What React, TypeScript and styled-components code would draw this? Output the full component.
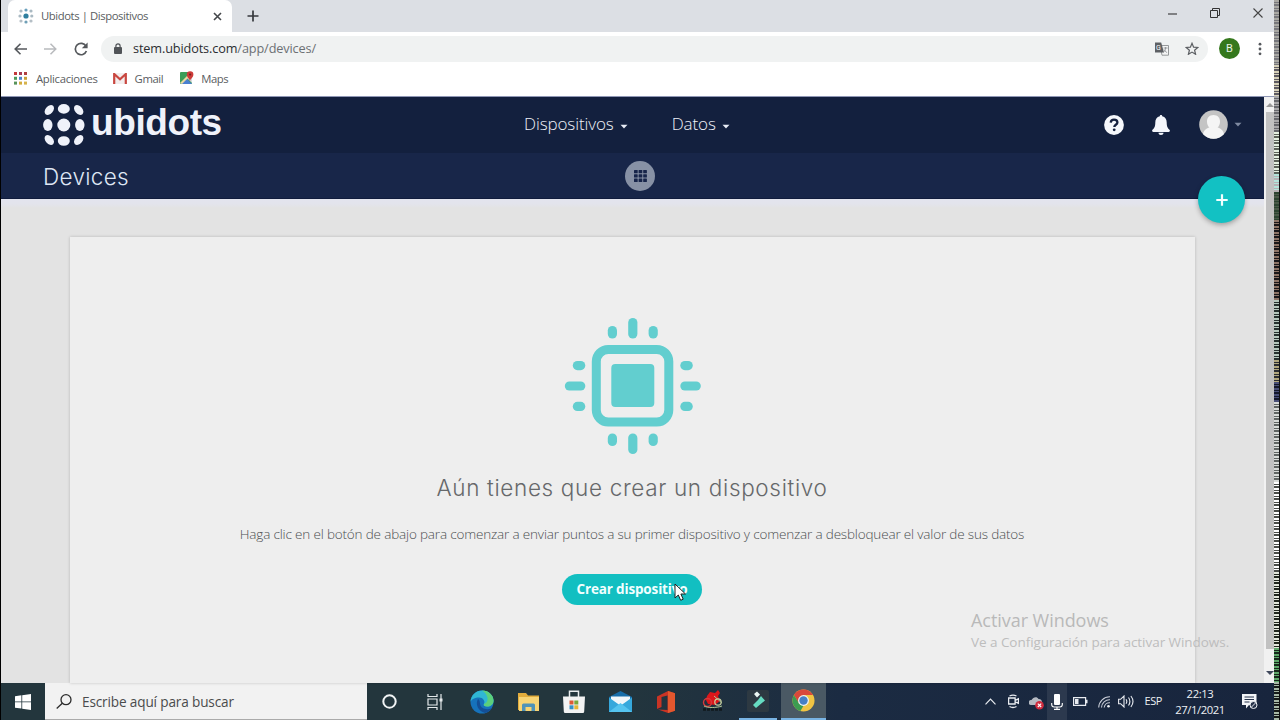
import React from "react";
import styled, { createGlobalStyle } from "styled-components";

const Global = createGlobalStyle`
  * { box-sizing: border-box; }
  body { margin: 0; overflow: hidden; font-family: "Open Sans", "Noto Sans", sans-serif; }
  svg { display: block; flex: none; }
`;

const Desktop = styled.div`
  position: relative;
  width: 1280px;
  height: 720px;
  display: flex;
  background: #fff;
  border-left: 1px solid #000;
  border-right: 1px solid #111;
  overflow: hidden;
`;
const Screen = styled.div`
  width: 1273px;
  display: flex;
  flex-direction: column;
  flex: none;
`;
const EdgeStrip = styled.div`
  width: 5px;
  display: flex;
  flex-direction: column;
`;
const EdgeBand = styled.div<{ $h: number; $a: string; $b: string }>`
  height: ${(p) => p.$h}px;
  background: repeating-linear-gradient(180deg, ${(p) => p.$a} 0 2px, ${(p) => p.$b} 2px 3px, ${(p) => p.$a} 3px 4px, ${(p) => p.$b} 4px 6px);
`;

const Label = styled.span<{ $size: number; $ls?: number; $color?: string; $weight?: number; $ml?: number; $dy?: number }>`
  font-size: ${(p) => p.$size}px;
  letter-spacing: ${(p) => p.$ls ?? 0}px;
  color: ${(p) => p.$color ?? "#5a5d61"};
  font-weight: ${(p) => p.$weight ?? 400};
  margin-left: ${(p) => p.$ml ?? 0}px;
  margin-top: ${(p) => p.$dy ?? 0}px;
  line-height: 1.35;
  white-space: nowrap;
`;
const Slot = styled.div<{ $ml?: number; $dy?: number }>`
  margin-left: ${(p) => p.$ml ?? 0}px;
  margin-top: ${(p) => p.$dy ?? 0}px;
  flex: none;
`;

/* Browser chrome */
const TabStrip = styled.div`
  height: 32px;
  display: flex;
  align-items: center;
  padding-left: 7px;
  background: #dcdfe4;
`;
const Tab = styled.div`
  width: 224px;
  height: 32px;
  display: flex;
  align-items: center;
  padding-left: 10px;
  background: #fff;
  border-radius: 7px 7px 0 0;
`;
const Push = styled.div`
  flex: 1;
`;
const Toolbar = styled.div`
  height: 33px;
  display: flex;
  align-items: center;
  padding-left: 13px;
  background: #fff;
`;
const Address = styled.div`
  width: 1107px;
  height: 26px;
  margin-left: 13px;
  display: flex;
  align-items: center;
  padding: 0 9px 0 13px;
  border-radius: 13px;
  background: #f0f2f2;
`;
const Profile = styled.div`
  width: 21px;
  height: 21px;
  margin-left: 11px;
  border-radius: 50%;
  background: #35781d;
  color: #e8f2e4;
  font: 11px/21px Roboto, sans-serif;
  text-align: center;
`;
const Bookmarks = styled.div`
  height: 32px;
  display: flex;
  align-items: center;
  padding: 0 0 5px 13px;
  background: #fff;
  border-bottom: 1px solid #8f97b5;
`;

/* Web application */
const Viewport = styled.div`
  height: 586px;
  display: flex;
`;
const Page = styled.div`
  position: relative;
  width: 1263px;
  display: flex;
  flex-direction: column;
  background: #e2e2e2;
`;
const NavBar = styled.header`
  height: 56px;
  display: flex;
  align-items: center;
  padding: 0 0 1px 42px;
  background: #13203e;
`;
const Wordmark = styled.div`
  margin: -4px 0 0 6px;
  width: 133px;
  color: #eff2fa;
  font: 700 37px/42px "Liberation Sans", sans-serif;
  letter-spacing: -0.4px;
`;
const SubBar = styled.div`
  height: 46px;
  display: flex;
  align-items: center;
  padding-left: 42px;
  background: #182649;
  border-bottom: 1px solid #101c3d;
`;
const Heading = styled.h1<{ $size: number; $ls: number; $color: string }>`
  margin: 0;
  font: 300 ${(p) => p.$size}px/32px Inter, sans-serif;
  letter-spacing: ${(p) => p.$ls}px;
  color: ${(p) => p.$color};
  white-space: nowrap;
`;
const GridButton = styled.div`
  width: 30px;
  height: 30px;
  display: grid;
  place-items: center;
  border-radius: 50%;
  background: #8791a5;
`;
const Body = styled.main`
  flex: 1;
  display: flex;
  padding: 38px 69px 0;
  background: linear-gradient(180deg, #e3e4ee 0, #e3e4ec 5px, #e3e3e3 9px);
`;
const Card = styled.section`
  flex: 1;
  display: flex;
  flex-direction: column;
  align-items: center;
  padding: 81px 1px 0 0;
  background: #eee;
  box-shadow: 0 0 3px rgba(0, 0, 0, 0.2);
`;
const Create = styled.button`
  width: 140px;
  height: 31px;
  margin-top: 31px;
  padding: 0;
  border: 0;
  border-radius: 16px;
  background: #12bfc1;
  color: #f2ffff;
  font: 700 13.5px/31px "Open Sans", sans-serif;
  letter-spacing: -0.15px;
  white-space: nowrap;
`;
const Fab = styled.div`
  position: absolute;
  left: 1197px;
  top: 79px;
  width: 47px;
  height: 47px;
  display: grid;
  place-items: center;
  border-radius: 50%;
  background: #12c1c3;
  box-shadow: 0 2px 5px rgba(0, 0, 0, 0.3);
`;
const ScrollBar = styled.div`
  width: 10px;
  display: flex;
  flex-direction: column;
  align-items: flex-end;
  background: #f1f1f1;
`;
const ScrollThumb = styled.div`
  width: 8px;
  height: 537px;
  margin-top: 5px;
  background: #c1c1c1;
`;

/* Desktop overlay and task bar */
const Watermark = styled.div`
  position: absolute;
  left: 970px;
  top: 608px;
  display: flex;
  flex-direction: column;
`;
const Pointer = styled.div`
  position: absolute;
  left: 673px;
  top: 583px;
`;
const TaskBar = styled.footer`
  height: 37px;
  display: flex;
  align-items: center;
  background: linear-gradient(90deg, #23363d 0, #23363d 48%, #1b2b42 66%, #18253d 100%);
`;
const StartButton = styled.div`
  width: 44px;
  display: flex;
  padding-left: 14px;
`;
const Search = styled.div`
  width: 322px;
  height: 37px;
  display: flex;
  align-items: center;
  padding-left: 11px;
  background: #f2f2f2;
  border-bottom: 1px solid #aaa;
`;
const TaskButton = styled.div<{ $w: number; $active?: boolean; $open?: boolean }>`
  width: ${(p) => p.$w}px;
  height: 37px;
  display: grid;
  place-items: center;
  background: ${(p) => (p.$active ? "#4a5964" : "transparent")};
  border-bottom: ${(p) => (p.$open ? "2px solid #79b4e4" : "0")};
`;
const Clock = styled.div`
  width: 56px;
  margin-left: 10px;
  display: flex;
  flex-direction: column;
  align-items: center;
`;
const MicCell = styled.div`
  width: 20px;
  height: 37px;
  margin-left: 3px;
  display: grid;
  place-items: center;
  background: #2c394e;
`;

const Favicon = () => (
  <svg width="16" height="16" viewBox="0 0 16 16">
    {[[3, 3, "#a9b9c2"], [8, 2, "#6aa0bd"], [13, 3, "#a9b9c2"], [2, 8, "#a9b9c2"], [13.8, 8, "#a9b9c2"], [3, 13, "#b5bfc6"], [8, 14, "#6f9fb6"], [13, 13, "#b5bfc6"]].map((d, i) => (
      <circle key={i} cx={d[0]} cy={d[1]} r="1.6" fill={d[2] as string} />
    ))}
    <circle cx="8" cy="8" r="2.6" fill="#2f7f9f" />
  </svg>
);

const UbiLogo = () => (
  <svg width="42" height="42" viewBox="0 0 42 42" fill="#eff2fa">
    <ellipse cx="20.8" cy="4.9" rx="6" ry="4.8" />
    <ellipse cx="20.8" cy="37" rx="6" ry="4.8" />
    <ellipse cx="4.8" cy="21" rx="4.7" ry="6.1" />
    <ellipse cx="36.8" cy="21" rx="4.7" ry="6.1" />
    <circle cx="20.8" cy="21" r="6.5" />
    <ellipse cx="6.3" cy="6" rx="5.6" ry="3.8" transform="rotate(-48 6.3 6)" />
    <ellipse cx="35.7" cy="6" rx="5.6" ry="3.8" transform="rotate(48 35.7 6)" />
    <ellipse cx="6.3" cy="36" rx="5.6" ry="3.8" transform="rotate(48 6.3 36)" />
    <ellipse cx="35.7" cy="36" rx="5.6" ry="3.8" transform="rotate(-48 35.7 36)" />
  </svg>
);

const Caret = ({ color = "#e8ecf5" }: { color?: string }) => (
  <svg width="8" height="5" viewBox="0 0 8 5"><path d="M.5.8h7L4 4.4z" fill={color} /></svg>
);

const Chip = () => (
  <svg width="137" height="136" viewBox="-.8 0 137 136" fill="#62cecf">
    <rect x="31.5" y="31.5" width="72.5" height="72.5" rx="12" fill="none" stroke="#62cecf" strokeWidth="9" />
    <rect x="46.5" y="46" width="43" height="43" rx="4" />
    {[0, 90, 180, 270].map((a) => (
      <g key={a} transform={`rotate(${a} 68 68)`}>
        <rect x="63.4" y="0" width="9.2" height="20.5" rx="4.6" />
        <rect x="43" y="8" width="9.2" height="12.5" rx="4.6" />
        <rect x="83.8" y="8" width="9.2" height="12.5" rx="4.6" />
      </g>
    ))}
  </svg>
);

const NineGrid = () => (
  <svg width="13" height="12" viewBox="0 0 13 12" fill="#17254a">
    {[0, 1, 2].map((r) => [0, 1, 2].map((c) => <rect key={`${r}${c}`} x={c * 4.6} y={r * 4.3} width="3.7" height="3.3" rx=".5" />))}
  </svg>
);

const appColors = ["#c3393b", "#a83c56", "#b04040", "#4c9a58", "#4a83c9", "#c8a03a", "#58935a", "#d2ab3d", "#d6b34c"];
const AppsIcon = () => (
  <svg width="13" height="13" viewBox="0 0 13 13">
    {appColors.map((c, i) => <rect key={i} x={(i % 3) * 5} y={Math.floor(i / 3) * 4.8} width="3" height="3" fill={c} />)}
  </svg>
);

const BrowserChrome = () => (
  <>
    <TabStrip>
      <Tab>
        <Favicon />
        <Label $size={11.3} $ml={7} $ls={-0.42}>Ubidots | Dispositivos</Label>
        <Push />
        <Slot><svg width="9" height="9" viewBox="0 0 9 9" stroke="#44474a" strokeWidth="1.6"><path d="M1 1l7 7M8 1L1 8" /></svg></Slot>
        <Slot $ml={10} />
      </Tab>
      <Slot $ml={15}><svg width="12" height="12" viewBox="0 0 12 12" stroke="#36393d" strokeWidth="1.7"><path d="M6 .5v11M.5 6h11" /></svg></Slot>
      <Push />
      <Slot $dy={-5}><svg width="9" height="2"><rect y=".5" width="9" height="1" fill="#222" /></svg></Slot>
      <Slot $ml={33} $dy={-6}><svg width="10" height="10" viewBox="0 0 10 10" fill="none" stroke="#333"><path d="M.5 2.5h7v7h-7zM2.5 2.5v-2h7v7h-2" /></svg></Slot>
      <Slot $ml={33} $dy={-6}><svg width="10" height="10" viewBox="0 0 10 10" stroke="#444" strokeWidth="1.1"><path d="M.5.5l9 9M9.5.5l-9 9" /></svg></Slot>
      <Slot $ml={11} />
    </TabStrip>
    <Toolbar>
      <svg width="13" height="12" viewBox="0 0 13 12" fill="none" stroke="#55585c" strokeWidth="1.6"><path d="M13 6H1.3M6.5.7L1.2 6l5.3 5.3" /></svg>
      <Slot $ml={17}><svg width="13" height="12" viewBox="0 0 13 12" fill="none" stroke="#b8babd" strokeWidth="1.5"><path d="M0 6h11.7M6.5.7L11.8 6l-5.3 5.3" /></svg></Slot>
      <Slot $ml={17}><svg width="14" height="14" viewBox="0 0 14 14"><path d="M12 4.2A5.7 5.7 0 1 0 12.4 9" fill="none" stroke="#55585c" strokeWidth="1.7" /><path d="M13.6.4v5.8H7.8z" fill="#55585c" /></svg></Slot>
      <Address>
        <svg width="8" height="11" viewBox="0 0 8 11"><rect y="4" width="8" height="7" rx="1" fill="#505357" /><path d="M1.9 4.5V3a2.1 2.1 0 0 1 4.2 0v1.5" fill="none" stroke="#505357" strokeWidth="1.2" /></svg>
        <Label $size={12.7} $ml={11} $ls={-0.12} $dy={1} $color="#2b2d30">stem.ubidots.com<Label as="span" $size={12.7} $ls={-0.12} $color="#6c7074">/app/devices/</Label></Label>
        <Push />
        <svg width="14" height="14" viewBox="0 0 14 14"><path d="M5 3.5h8.5v9.7H7z" fill="#f4f5f5" stroke="#8b8e91" strokeWidth=".9" /><path d="M0 .5h6.2L9 10.5H0z" fill="#5d6064" /><text x="1" y="8" fontSize="7" fontFamily="Roboto" fill="#fff">G</text><path d="M8.6 6h4M10.6 5v1c0 2-1 3.5-2 4m.5-2.500c.8 1.500 1.500 2.500 3 3" fill="none" stroke="#85888b" strokeWidth=".8" /></svg>
        <Slot $ml={16}><svg width="14" height="13" viewBox="0 0 14 13"><path d="M7 1.300l1.600 3.900 4.200.300-3.200 2.700 1 4.100L7 10.100l-3.600 2.200 1-4.100L1.200 5.500l4.200-.3z" fill="none" stroke="#5b5e62" strokeWidth="1.200" /></svg></Slot>
      </Address>
      <Profile>B</Profile>
      <Slot $ml={18}><svg width="4" height="14" viewBox="0 0 4 14" fill="#55585c"><circle cx="2" cy="2.200" r="1.400" /><circle cx="2" cy="7" r="1.400" /><circle cx="2" cy="11.800" r="1.400" /></svg></Slot>
    </Toolbar>
    <Bookmarks>
      <AppsIcon />
      <Label $size={11.3} $ml={9} $dy={1} $ls={-0.3}>Aplicaciones</Label>
      <Slot $ml={15}><svg width="14" height="11" viewBox="0 0 14 11"><path d="M0 0h14v11H0z" fill="#f3eeee" /><path d="M1.200 11V1L7 6.200 12.800 1v10" fill="none" stroke="#c94740" strokeWidth="2.200" /></svg></Slot>
      <Label $size={11.3} $ml={8} $dy={1} $ls={-0.4}>Gmail</Label>
      <Slot $ml={17}>
        <svg width="14" height="14" viewBox="0 0 14 14"><rect y="1" width="12" height="12" rx="1" fill="#3c9d58" /><path d="M12 4v8L7 7z" fill="#d9dde0" /><path d="M1 13l5.500-5.500L12 13z" fill="#4a7fd0" /><path d="M0 12L11 1l1 2L2 13z" fill="#e9d9a0" /><path d="M10 10C9.500 7.500 6.800 6.500 6.800 3.500a3.300 3.300 0 0 1 6.600 0C13.400 6.500 10.500 7.500 10 10z" fill="#cd3b38" /><circle cx="10.100" cy="3.500" r="1.100" fill="#74201f" /></svg>
      </Slot>
      <Label $size={11.3} $ml={7} $dy={1} $ls={-0.4}>Maps</Label>
    </Bookmarks>
  </>
);

const WebApp = () => (
  <Viewport>
    <Page>
      <NavBar>
        <UbiLogo />
        <Wordmark>ubidots</Wordmark>
        <Label $size={17} $ml={300} $ls={-0.1} $weight={300} $color="#eef1f8">Dispositivos</Label>
        <Slot $ml={6} $dy={3}><Caret /></Slot>
        <Label $size={17} $ml={44} $ls={-0.1} $weight={300} $color="#eef1f8">Datos</Label>
        <Slot $ml={6} $dy={3}><Caret /></Slot>
        <Push />
        <svg width="20" height="20" viewBox="0 0 20 20"><circle cx="10" cy="10" r="9.900" fill="#f6f8fc" /><path d="M6.700 7.600C6.900 5.600 8.200 4.700 10 4.700c2 0 3.400 1.200 3.400 2.800 0 2.300-3.100 2.200-3.100 4.500" fill="none" stroke="#15213f" strokeWidth="2.300" /><circle cx="10.200" cy="14.800" r="1.400" fill="#15213f" /></svg>
        <Slot $ml={28}><svg width="18" height="20" viewBox="0 0 18 20" fill="#f4f6fb"><path d="M9 0c.8 0 1.200.5 1.200 1.300C13.300 2 14.700 4.500 14.700 7.500c0 4.500 1.300 6 2.800 7.300.8.900.3 2.200-.8 2.200H1.300C.2 17-.3 15.700.5 14.800 2 13.500 3.300 12 3.300 7.500c0-3 1.400-5.500 4.500-6.200C7.800.5 8.200 0 9 0zM6.500 17.800h5C11.500 19.300 10.400 20 9 20s-2.500-.700-2.500-2.200z" /></svg></Slot>
        <Slot $ml={29}><svg width="29" height="29" viewBox="0 0 29 29"><circle cx="14.500" cy="14.500" r="14.300" fill="#c4c4c4" /><path d="M14.500 5c4.200 0 6.500 2.800 6.500 6.700 0 2.500-1 4.500-2.400 5.800 2.600.9 5.400 2 6.400 6.500a14.200 14.200 0 0 1-21 0c1-4.500 3.800-5.600 6.400-6.500C9 16.200 8 14.200 8 11.700 8 7.800 10.300 5 14.500 5z" fill="#f5f5f5" /></svg></Slot>
        <Slot $ml={6}><Caret color="#7f8aa1" /></Slot>
        <Slot $ml={22} />
      </NavBar>
      <SubBar>
        <Slot $dy={2}><Heading $size={22.5} $ls={0.3} $color="#dfe6f4">Devices</Heading></Slot>
        <Push />
        <GridButton><NineGrid /></GridButton>
        <Slot $ml={609} />
      </SubBar>
      <Body>
        <Card>
          <Chip />
          <Slot $dy={18}><Heading $size={22.5} $ls={0.66} $color="#66686a">Aún tienes que crear un dispositivo</Heading></Slot>
          <Label $size={13.5} $dy={21} $ls={-0.17} $weight={300} $color="#4c4f51">
            Haga clic en el botón de abajo para comenzar a enviar puntos a su primer dispositivo y comenzar a desbloquear el valor de sus datos
          </Label>
          <Create>Crear dispositivo</Create>
        </Card>
      </Body>
      <Fab><svg width="12" height="12" viewBox="0 0 12 12" stroke="#f3ffff" strokeWidth="2.200"><path d="M6 .3v11.400M.3 6h11.400" /></svg></Fab>
    </Page>
    <ScrollBar>
      <Slot $dy={6}><svg width="8" height="4"><path d="M0 4l4-4 4 4z" fill="#999" /></svg></Slot>
      <ScrollThumb />
      <Slot $dy={22}><svg width="8" height="4"><path d="M0 0h8L4 4z" fill="#40495c" /></svg></Slot>
    </ScrollBar>
  </Viewport>
);

const Task = () => (
  <TaskBar>
    <StartButton><svg width="16" height="16" viewBox="0 0 16 16" fill="#fff"><path d="M0 2.200l6.400-.9v6.200H0zM7.200 1.200L16 0v7.500H7.200zM0 8.300h6.400v6.200L0 13.700zM7.200 8.300H16V16l-8.800-1.300z" /></svg></StartButton>
    <Search>
      <svg width="16" height="15" viewBox="0 0 16 15" fill="none" stroke="#2b2b2b" strokeWidth="1.300"><circle cx="10" cy="5.700" r="5" /><path d="M6.300 9.200L.7 14.500" /></svg>
      <Label $size={13.6} $ml={10} $ls={-0.15} $dy={2} $color="#4a4b4c">Escribe aquí para buscar</Label>
    </Search>
    <TaskButton $w={45}><svg width="15" height="15"><circle cx="7.500" cy="7.500" r="6.200" fill="none" stroke="#f1f4f5" strokeWidth="2" /></svg></TaskButton>
    <TaskButton $w={45}><svg width="16" height="16" viewBox="0 0 16 16" fill="none" stroke="#e4e9eb" strokeWidth="1.200"><path d="M1 0v2.500h9V0M1 16v-2.500h9V16M1 5h9v6H1zM14 0v16" /><path d="M12.500 4.500h3v3h-3z" fill="#e4e9eb" stroke="none" /></svg></TaskButton>
    <TaskButton $w={50}>
      <svg width="24" height="24" viewBox="0 0 24 24"><circle cx="12" cy="12" r="11.500" fill="#1672bb" /><path d="M.5 12C1 5 6 .5 12 .5c7 0 11.500 5 11.500 10 0 4-3 6-6.500 6-2.500 0-4-1-3-2.500 1.500-3-1-6.500-5-6.500S1.500 9 .5 12z" fill="#30b7d4" /><path d="M12 .5c7 0 11.500 5 11.500 10 0 4-3 6-6.500 6-2.500 0-4-1-3-2.500C20 12 18 4 12 .5z" fill="#5cd07c" /><path d="M8 9c-3 5 0 12 7 14 3-.5 6-3 7-5-5 2.500-11 1-12-4-.3-2 0-4-2-5z" fill="#144f96" /></svg>
    </TaskButton>
    <TaskButton $w={42}><svg width="21" height="18" viewBox="0 0 21 18"><path d="M0 0h8l2 2.500h11V17H0z" fill="#e2ad3d" /><path d="M1 4h20v14H1z" fill="#f7d474" /><path d="M4 18v-6q0-1.500 1.500-1.500h10Q17 10.500 17 12v6h-3.500v-4h-6v4z" fill="#4f93b8" /></svg></TaskButton>
    <TaskButton $w={50}><svg width="22" height="23" viewBox="0 0 22 23"><path d="M6.500 7V1.200h9V7" fill="none" stroke="#e9edef" strokeWidth="1.500" /><path d="M0 6.500h22l-.8 15q0 1.500-1.500 1.500H2.300Q.8 23 .8 21.500z" fill="#f2f3f3" /><path d="M6.500 10.500h4v4h-4z" fill="#dd5a35" /><path d="M11.300 10.500h4v4h-4z" fill="#79a83a" /><path d="M6.500 15.300h4v4h-4z" fill="#3691c5" /><path d="M11.300 15.300h4v4h-4z" fill="#e6b636" /></svg></TaskButton>
    <TaskButton $w={43}><svg width="23" height="21" viewBox="0 0 23 21"><path d="M0 6l11.500-6L23 6v4H0z" fill="#176da8" /><path d="M2 5.500h19V14H2z" fill="#f1f6f9" /><path d="M0 6.500l11.500 8.300L23 6.500V21H0z" fill="#36a8dc" /><path d="M0 21l11.500-9L23 21z" fill="#55c4ef" /></svg></TaskButton>
    <TaskButton $w={48}><svg width="18" height="22" viewBox="0 0 18 22"><path d="M0 5.500L11 0l7 2.300v17.400L11 22 1 18.500l9.500.5V4.500L4.500 6v10L0 18z" fill="#c93425" /><path d="M11 0l7 2.300v17.400L11 22z" fill="#e4572e" /></svg></TaskButton>
    <TaskButton $w={45}>
      <svg width="22" height="23" viewBox="0 0 22 23"><path d="M5 6l3-4 5 1 3-3 2 3-2 3 2 5-5 4-7-1-2-4z" fill="#dc171b" /><circle cx="5.500" cy="12.500" r="4" fill="none" stroke="#d7373a" strokeWidth="1.400" /><circle cx="16" cy="12" r="3.200" fill="none" stroke="#ccd1a2" strokeWidth="1.200" /><path d="M2 16c4 2 12 2 18 0M12 6l8 7" fill="none" stroke="#b0c593" strokeWidth="1" /><path d="M1 19.500h20" stroke="#10191c" strokeWidth="2.500" strokeDasharray="3 1" /></svg>
    </TaskButton>
    <Slot $ml={4} />
    <TaskButton $w={38} $open><svg width="22" height="22" viewBox="0 0 22 22"><rect width="22" height="22" rx="2" fill="#2d3942" /><path d="M7 4l3-2.500 3 3-3 3z" fill="#edf7f4" /><path d="M11 10l3-4 4 4.500L9 18l-3-3 4-4z" fill="#66dbc1" /></svg></TaskButton>
    <Slot $ml={4} />
    <TaskButton $w={45} $active $open>
      <svg width="23" height="23" viewBox="0 0 24 24"><circle cx="12" cy="12" r="11.500" fill="#f1c443" /><path d="M2 6.200A11.500 11.500 0 0 1 22 6.300H12v5.700L7.200 15z" fill="#d9483b" /><path d="M2 6.200l5.300 8.600 4.700 2.700-3.200 5.500A11.500 11.500 0 0 1 2 6.200z" fill="#3c9c51" /><circle cx="12" cy="12" r="5.700" fill="#eff3f4" /><circle cx="12" cy="12" r="4.400" fill="#477fc4" /></svg>
    </TaskButton>
    <Push />
    <svg width="11" height="7" viewBox="0 0 11 7" fill="none" stroke="#e8ebf0" strokeWidth="1.200"><path d="M.5 6.300l5-5.300 5 5.300" /></svg>
    <Slot $ml={12}><svg width="11" height="15" viewBox="0 0 11 15" fill="none" stroke="#e8ebf0" strokeWidth="1.300"><path d="M.6 4h6.500v6H.6zM7.200 6.300l3.200-1.600v4.600L7.200 7.800M1.500 2Q5 .2 8.500 2M1.500 12.500Q5 14.500 8.500 12.500" /></svg></Slot>
    <Slot $ml={10} $dy={2}><svg width="15" height="14" viewBox="0 0 15 14"><path d="M2 9a2.500 2.500 0 0 1 .5-5C4 1 8 0 9.500 3c3 0 4 2 3.500 6z" fill="#b5bac2" /><circle cx="10.500" cy="9.300" r="4.300" fill="#cf2c3f" /><path d="M8.800 7.600l3.400 3.400M12.200 7.600L8.800 11" stroke="#fff" strokeWidth="1.100" /></svg></Slot>
    <MicCell><svg width="12" height="16" viewBox="0 0 12 16"><rect x="3" width="6" height="11" rx="1" fill="#fff" /><path d="M.7 9v1.500Q.7 13 3.200 13h5.600q2.500 0 2.500-2.500V9M6 13v2.400M3 15.400h6" fill="none" stroke="#fff" strokeWidth="1.100" /></svg></MicCell>
    <Slot $ml={6}><svg width="15" height="9" viewBox="0 0 15 9"><path d="M.6.6h12v7.800H.6z" fill="none" stroke="#e8ebf0" strokeWidth="1.200" /><path d="M2 2h3.500v5H2zM13 2.700h1.500v3.600H13z" fill="#e8ebf0" /></svg></Slot>
    <Slot $ml={10}><svg width="13" height="12" viewBox="0 0 13 12" fill="none" stroke="#c8cdd7" strokeWidth="1.100"><path d="M.7 11.500A11 11 0 0 1 12 .8M3.500 11.500A8 8 0 0 1 12 3.800M6.200 11.500A5.500 5.500 0 0 1 12 6.700" /><circle cx="10.500" cy="10.300" r="1.300" fill="#eef1f5" stroke="none" /></svg></Slot>
    <Slot $ml={7}><svg width="16" height="13" viewBox="0 0 16 13" fill="none" stroke="#e8ebf0" strokeWidth="1.100"><path d="M.6 4.300h2L6 1v11L2.600 8.700h-2zM8 4.200q1.600 2.300 0 4.600M10.500 2.500q2.800 4 0 8M12.900 1q4.200 5.500 0 11" /></svg></Slot>
    <Label $size={11} $ml={10} $color="#edf0f4" $ls={-0.4}>ESP</Label>
    <Clock>
      <Label $size={11.3} $color="#edf0f4" $ls={-0.4}>22:13</Label>
      <Label $size={11.3} $color="#edf0f4" $ls={-0.45} $dy={1}>27/1/2021</Label>
    </Clock>
    <Slot $ml={13}><svg width="17" height="16" viewBox="0 0 17 16"><path d="M1 0h14.500v11H8l-3 3.500V11H1z" fill="#f3f5f8" /><path d="M3.500 3h9.500M3.500 5.500h9.500M3.500 8h5" stroke="#26334a" strokeWidth="1" /><circle cx="12.500" cy="11" r="3.500" fill="#253149" stroke="#edf0f4" strokeWidth="1" /><path d="M10 13.500l5-5" stroke="#edf0f4" /></svg></Slot>
    <Slot $ml={16} />
  </TaskBar>
);

const bands: [number, string, string][] = [
  [65, "#aaa9a4", "#77777c"], [31, "#d6d0b8", "#5e5b63"], [36, "#aaa9ab", "#66676c"], [42, "#e4efe0", "#5b6158"],
  [18, "#b4e4da", "#b6b0b4"], [28, "#2c4431", "#4b5a49"], [80, "#8d7466", "#191719"], [60, "#b6c7bd", "#26302e"],
  [22, "#b1a77d", "#2a2c31"], [20, "#4a5078", "#14182a"], [80, "#d8dbd8", "#5f6462"], [90, "#ffffff", "#4a4d49"],
  [76, "#e4e8dc", "#20261d"], [34, "#5fa86b", "#16281a"], [38, "#a7b8a6", "#171b18"],
];

export default function App() {
  return (
    <>
      <Global />
      <Desktop>
        <Screen>
          <BrowserChrome />
          <WebApp />
          <Task />
        </Screen>
        <EdgeStrip>
          {bands.map(([h, a, b], i) => <EdgeBand key={i} $h={h} $a={a} $b={b} />)}
        </EdgeStrip>
        <Watermark>
          <Label $size={18} $ls={-0.05} $color="#b9b9b9">Activar Windows</Label>
          <Label $size={13.500} $ls={-0.05} $dy={1} $color="#bdbdbd">Ve a Configuración para activar Windows.</Label>
        </Watermark>
        <Pointer>
          <svg width="13" height="19" viewBox="0 0 13 19"><path d="M1 1v14l3.300-3 2.400 5.300 2.500-1.100L6.900 11H11.500z" fill="#fff" stroke="#222" strokeWidth="1" /></svg>
        </Pointer>
      </Desktop>
    </>
  );
}
